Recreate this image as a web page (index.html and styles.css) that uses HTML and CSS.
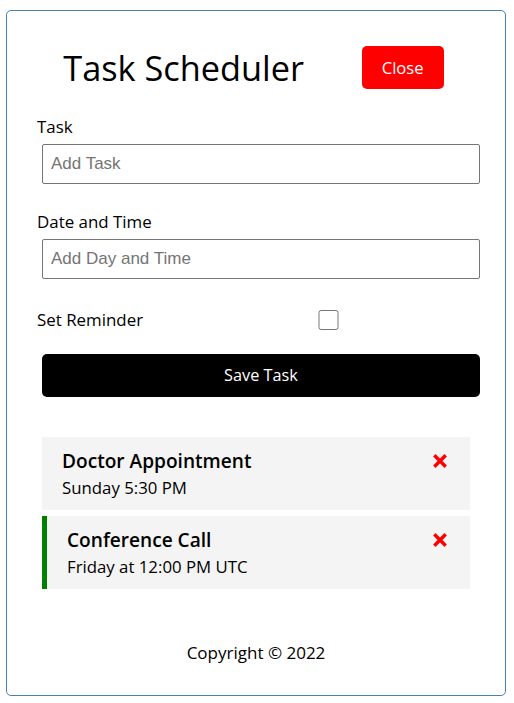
FILE: index.html
```html
<!DOCTYPE html>
<html lang="en">
<head>
<meta charset="utf-8">
<title>Task Scheduler</title>
<link rel="stylesheet" href="styles.css">
</head>
<body>
<div class="container">
  <header class="header">
    <h1 class="title">Task Scheduler</h1>
    <button class="btn btn-close">Close</button>
  </header>
  <form class="add-form">
    <div class="form-control">
      <label>Task</label>
      <input type="text" placeholder="Add Task">
    </div>
    <div class="form-control">
      <label>Date and Time</label>
      <input type="text" placeholder="Add Day and Time">
    </div>
    <div class="form-control form-control-check">
      <label>Set Reminder</label>
      <input type="checkbox">
    </div>
    <button type="button" class="btn btn-block">Save Task</button>
  </form>
  <div class="tasks">
    <div class="task">
      <h3>Doctor Appointment
        <svg class="del" viewBox="0 0 14 14" width="14" height="14"><path d="M2.5 2.5 L11.5 11.5 M11.5 2.5 L2.5 11.5" stroke="#ff0000" stroke-width="3.4" stroke-linecap="square"/></svg>
      </h3>
      <p>Sunday 5:30 PM</p>
    </div>
    <div class="task reminder">
      <h3>Conference Call
        <svg class="del" viewBox="0 0 14 14" width="14" height="14"><path d="M2.5 2.5 L11.5 11.5 M11.5 2.5 L2.5 11.5" stroke="#ff0000" stroke-width="3.4" stroke-linecap="square"/></svg>
      </h3>
      <p>Friday at 12:00 PM UTC</p>
    </div>
  </div>
  <footer class="footer">
    <p>Copyright &copy; 2022</p>
  </footer>
</div>
</body>
</html>
```

FILE: styles.css
```css
* { box-sizing: border-box; }

body {
  margin: 0;
  font-family: "Open Sans", "Noto Sans", sans-serif;
  color: #000;
  background: #fff;
}

.container {
  margin: 10px 8px 7px 6px;
  border: 1px solid steelblue;
  border-radius: 5px;
  padding: 30px;
  min-height: 686px;
}

.header {
  display: flex;
  justify-content: space-around;
  align-items: center;
  margin-bottom: 21px;
}

.title {
  margin: 0;
  font-size: 34.3px;
  font-weight: 500;
  line-height: 42px;
}

.btn {
  display: inline-block;
  background: #000;
  color: #fff;
  border: none;
  padding: 10px 20px;
  margin: 5px;
  border-radius: 5px;
  font-size: 16.3px;
  line-height: 23px;
  font-family: inherit;
}

.btn-close {
  background: #ff0000;
  width: 82px;
  height: 43px;
  padding: 0;
  font-size: 16.6px;
}

.btn-block {
  display: block;
  margin: 5px;
  width: 438px;
}

.add-form {
  margin-bottom: 40px;
}

.form-control {
  display: flow-root;
  margin: 20px 0;
}

.form-control label {
  display: block;
  font-size: 16.9px;
  line-height: 24px;
}

.form-control input[type="text"] {
  display: block;
  width: 438px;
  height: 40px;
  margin: 5px 5px 6px;
  padding: 3px 8px;
  font-size: 17px;
  font-family: "Liberation Sans", Arial, sans-serif;
  border: 1px solid #767676;
  border-radius: 2px;
}

.form-control input::placeholder {
  color: #757575;
}

.form-control-check {
  display: flex;
  align-items: center;
  justify-content: space-between;
  height: 29px;
}

.form-control-check label {
  flex: 1;
}

.form-control-check input {
  flex: 2;
  height: 20px;
  margin: 3px 3px 3px 4px;
}

.task {
  background: #f4f4f4;
  margin: 5px 5px 6px;
  width: 428px;
  padding: 10px 20px;
}

.task.reminder {
  border-left: 5px solid green;
}

.task h3 {
  display: flex;
  align-items: center;
  justify-content: space-between;
  margin: 0;
  font-size: 19.1px;
  font-weight: 600;
  line-height: 28px;
}

.task .del {
  margin-right: 3px;
}

.task p {
  margin: 0;
  font-size: 16.8px;
  line-height: 25px;
}

.footer {
  margin-top: 52px;
  text-align: center;
}

.footer p {
  margin: 0;
  font-size: 17px;
  line-height: 24px;
}
```
